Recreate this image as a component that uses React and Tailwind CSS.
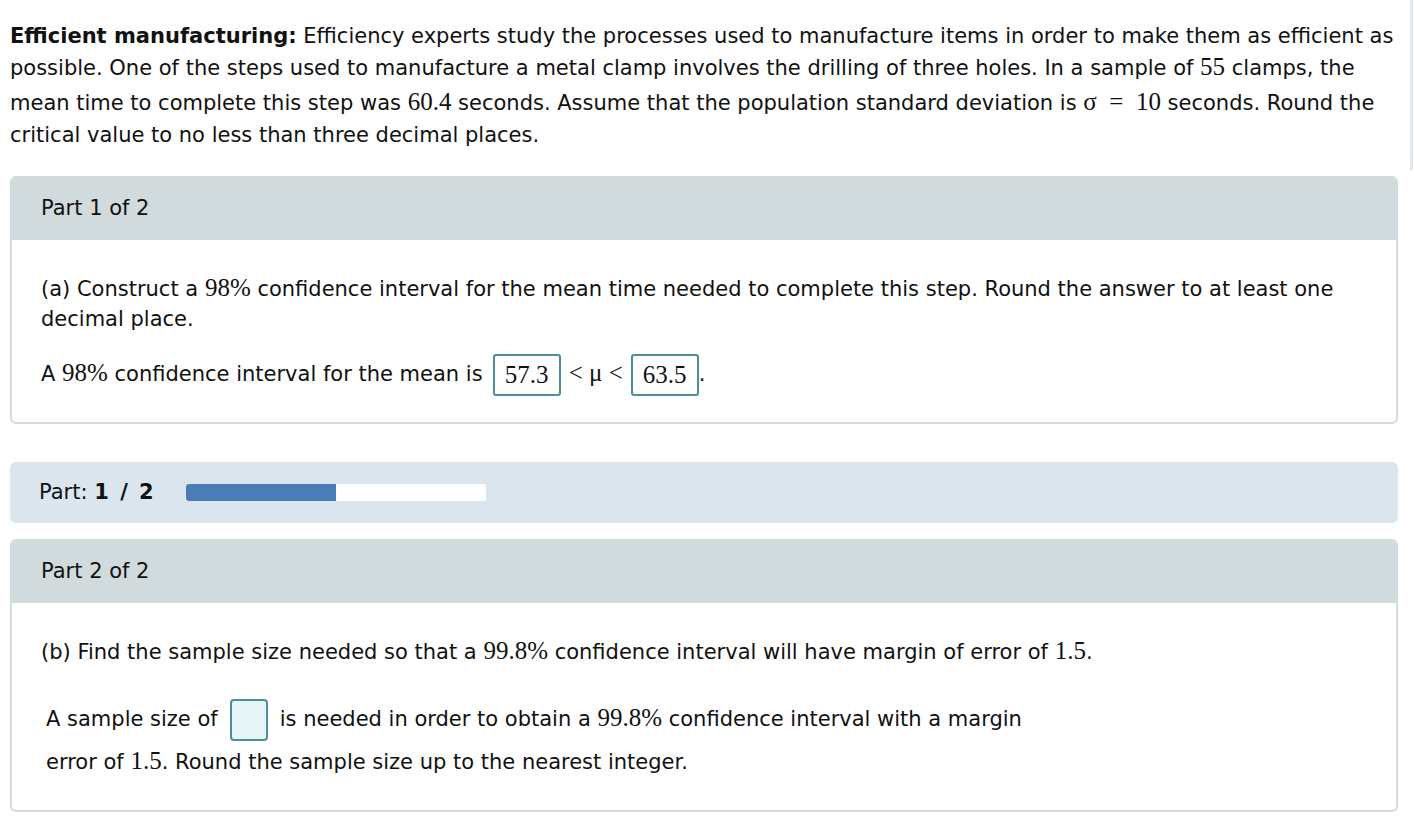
import React from "react";

const M = ({ children }) => (
  <span className="font-['Liberation_Serif',serif] text-[25px] leading-[20px]">{children}</span>
);

const PartCard = ({ title, children, className }) => (
  <div className={"ml-[10px] mr-[16px] rounded-md border-2 border-[#d3dadc] overflow-hidden bg-white " + (className || "")}>
    <div className="h-[62px] bg-[#d1dadd] flex items-center pl-[29px]">{title}</div>
    {children}
  </div>
);

export default function App() {
  return (
    <div className="relative min-h-screen bg-white text-[21px] text-[#111] font-['DejaVu_Sans',Verdana,sans-serif]">
      <div className="absolute right-[1px] top-0 w-[3px] h-[170px] bg-[#e3e6e8]" />
      <div className="pl-[10px] pt-[20px] leading-[32px] pr-[12px]">
        <b>Efficient manufacturing:</b> Efficiency experts study the processes used to manufacture items in order to make them as efficient as
        possible. One of the steps used to manufacture a metal clamp involves the drilling of three holes. In a sample of <M>55</M> clamps, the
        mean time to complete this step was <M>60.4</M> seconds. Assume that the population standard deviation is{" "}
        <span className="inline-block pt-[3px] leading-[32px]"><M>σ&nbsp;&nbsp;=&nbsp;&nbsp;10</M></span> seconds. Round the
        critical value to no less than three decimal places.
      </div>

      <PartCard title="Part 1 of 2" className="mt-[25px] h-[248px]">
        <div className="px-[29px] pt-[34px] leading-[30px]">
          (a) Construct a <M>98%</M> confidence interval for the mean time needed to complete this step. Round the answer to at least one
          decimal place.
        </div>
        <div className="px-[29px] mt-[20px] flex items-center">
          <span>A <M>98%</M> confidence interval for the mean is</span>
          <span className="ml-[10px] w-[68px] h-[42px] border-2 border-[#4a8f99] rounded-[3px] flex items-center justify-center"><M>57.3</M></span>
          <span className="mx-[8px]"><M>&lt; μ &lt;</M></span>
          <span className="w-[68px] h-[42px] border-2 border-[#4a8f99] rounded-[3px] flex items-center justify-center"><M>63.5</M></span>
          <span>.</span>
        </div>
      </PartCard>

      <div className="ml-[10px] mr-[16px] mt-[38px] h-[61px] rounded-md bg-[#dae5ee] flex items-center pl-[29px]">
        <span>Part: <b className="tracking-[2px]">1 / 2</b></span>
        <div className="ml-[30px] w-[300px] h-[17px] rounded-[3px] bg-white overflow-hidden">
          <div className="w-1/2 h-full bg-[#4a7db5]" />
        </div>
      </div>

      <PartCard title="Part 2 of 2" className="mt-[16px] h-[273px]">
        <div className="px-[29px] pt-[34px] leading-[30px]">
          (b) Find the sample size needed so that a <M>99.8%</M> confidence interval will have margin of error of <M>1.5</M>.
        </div>
        <div className="px-[34px] mt-[32px] flex items-center">
          <span>A sample size of</span>
          <span className="ml-[12px] mr-[12px] w-[38px] h-[42px] border-2 border-[#4a8f99] rounded-[4px] bg-[#e6f4f8]" />
          <span>is needed in order to obtain a <M>99.8%</M> confidence interval with a margin</span>
        </div>
        <div className="px-[34px] mt-[6px] leading-[30px]">
          error of <M>1.5</M>. Round the sample size up to the nearest integer.
        </div>
      </PartCard>
    </div>
  );
}
